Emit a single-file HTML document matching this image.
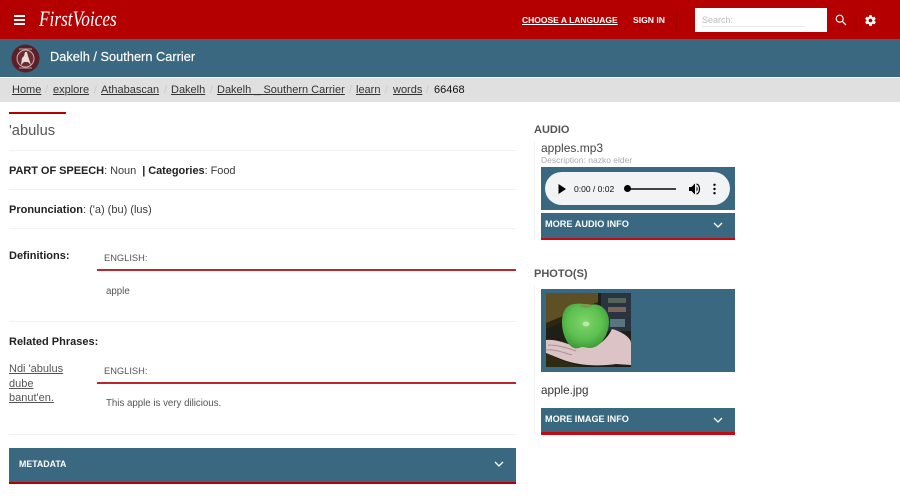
<!DOCTYPE html>
<html>
<head>
<meta charset="utf-8">
<style>
html,body{margin:0;padding:0;background:#fff;}
#p{position:relative;width:900px;height:502px;overflow:hidden;font-family:"Liberation Sans",sans-serif;color:#3a3a3a;font-size:11px;}
#p div,#p a,#p svg{position:absolute;white-space:nowrap;}
a{color:#444;text-decoration:underline;}
.bc{top:83px;font-size:11px;line-height:14px;color:#333;}
.sl{top:83px;font-size:11px;line-height:14px;color:#ccc;}
.hr{height:1px;background:#f0f0f0;}
b{color:#222;}
</style>
</head>
<body>
<div id="p">
<div style="left:0;top:0;width:900px;height:39px;background:#b40000"></div>
<div style="left:14px;top:15px;width:11px;height:1.500px;background:#fff"></div>
<div style="left:14px;top:19px;width:11px;height:1.500px;background:#fff"></div>
<div style="left:14px;top:23px;width:11px;height:1.500px;background:#fff"></div>
<div style="left:39px;top:7px;font-family:'Liberation Serif',serif;font-style:italic;font-size:22px;line-height:24px;color:#fff;transform:scaleX(.785);transform-origin:0 0">FirstVoices</div>
<a style="left:522px;top:14px;font-size:8.500px;line-height:12px;font-weight:bold;color:#fff">CHOOSE A LANGUAGE</a>
<div style="left:633px;top:14px;font-size:8.600px;line-height:12px;font-weight:bold;color:#fff">SIGN IN</div>
<div style="left:676px;top:11px;width:1px;height:19px;background:#a00000"></div>
<div style="left:695px;top:8px;width:132px;height:24px;background:#fff"></div>
<div style="left:702px;top:14px;font-size:9px;line-height:12px;color:#bbb">Search:</div>
<div style="left:702px;top:26px;width:103px;height:1px;background:#e8e8e8"></div>
<svg style="left:835px;top:14px" width="12" height="12" viewBox="0 0 12 12"><circle cx="4.700" cy="4.700" r="3.500" fill="none" stroke="#fff" stroke-width="1.100"/><path d="M7.300 7.300L11 11" stroke="#fff" stroke-width="1.300"/></svg>
<div style="left:856px;top:11px;width:1px;height:19px;background:#a80000"></div>
<svg style="left:864px;top:14px" width="13" height="13" viewBox="0 0 24 24"><path fill="#fff" d="M19.400 13c.1-.3.1-.7.1-1s0-.7-.1-1l2.100-1.600c.2-.2.2-.4.1-.6l-2-3.500c-.1-.2-.4-.3-.6-.2l-2.500 1c-.5-.4-1.100-.7-1.700-1L14.400 2.400C14.400 2.200 14.200 2 14 2h-4c-.2 0-.4.200-.5.400L9.100 5.100c-.6.300-1.200.600-1.700 1l-2.500-1c-.2-.1-.5 0-.6.200l-2 3.500c-.1.200-.1.400.1.600L4.500 11c0 .3-.1.700-.1 1s0 .7.100 1l-2.100 1.600c-.2.200-.2.400-.1.600l2 3.500c.1.200.4.300.6.200l2.500-1c.5.400 1.100.7 1.700 1l.4 2.700c0 .2.200.4.500.4h4c.2 0 .4-.2.500-.4l.4-2.700c.6-.3 1.200-.6 1.700-1l2.500 1c.2.100.5 0 .6-.2l2-3.500c.1-.2.100-.4-.1-.6L19.400 13zM12 15.500c-1.900 0-3.500-1.600-3.500-3.500s1.600-3.500 3.500-3.500 3.500 1.600 3.500 3.500-1.600 3.500-3.500 3.500z"/></svg>

<div style="left:0;top:39px;width:900px;height:38px;background:#3a6880"></div>
<svg style="left:11px;top:44px" width="29" height="29" viewBox="0 0 29 29"><circle cx="14.500" cy="14.500" r="14" fill="#5c1f28"/><circle cx="14.500" cy="14.500" r="8.500" fill="#6e2a32" stroke="#c9b3b3" stroke-width="1"/><path d="M10 21L11 14L13 12L14 8L16 8L17 12L20 21L17 18L13 18Z" fill="#e6dcdc"/><path d="M8 5H21M8 24H21" stroke="#b9a3a5" stroke-width="1"/></svg>
<div style="left:50px;top:48px;font-size:12.800px;line-height:18px;color:#fff;-webkit-text-stroke:.15px #fff">Dakelh / Southern Carrier</div>

<div style="left:0;top:78px;width:900px;height:24px;background:#e0e0e0"></div>
<a class="bc" style="left:12px">Home</a><div class="sl" style="left:45px">/</div>
<a class="bc" style="left:53px">explore</a><div class="sl" style="left:94px">/</div>
<a class="bc" style="left:101px">Athabascan</a><div class="sl" style="left:164px">/</div>
<a class="bc" style="left:171px">Dakelh</a><div class="sl" style="left:210px">/</div>
<a class="bc" style="left:217px">Dakelh _ Southern Carrier</a><div class="sl" style="left:349px">/</div>
<a class="bc" style="left:356px">learn</a><div class="sl" style="left:385px">/</div>
<a class="bc" style="left:393px">words</a><div class="sl" style="left:426px">/</div>
<div class="bc" style="left:434px;color:#111">66468</div>

<div style="left:9px;top:112px;width:57px;height:2px;background:#b40000"></div>
<div style="left:9px;top:122px;font-size:14.700px;line-height:18px;color:#555">'abulus</div>
<div class="hr" style="left:9px;top:150px;width:507px"></div>
<div style="left:9px;top:164px;line-height:14px;letter-spacing:-.05px"><b>PART OF SPEECH</b>: Noun &nbsp;<b>| Categories</b>: Food</div>
<div class="hr" style="left:9px;top:189px;width:507px"></div>
<div style="left:9px;top:203px;line-height:14px"><b>Pronunciation</b>: ('a) (bu) (lus)</div>
<div class="hr" style="left:9px;top:228px;width:507px"></div>

<div style="left:9px;top:249px;line-height:14px;font-weight:bold;color:#222">Definitions:</div>
<div style="left:104px;top:252px;font-size:9.300px;line-height:12px;color:#555">ENGLISH:</div>
<div style="left:97px;top:269px;width:419px;height:2px;background:#b8282e"></div>
<div style="left:106px;top:286px;font-size:9.700px;line-height:12px;color:#555">apple</div>
<div class="hr" style="left:9px;top:321px;width:507px"></div>

<div style="left:9px;top:335px;line-height:14px;font-weight:bold;color:#222">Related Phrases:</div>
<a style="left:9px;top:362px;line-height:14.500px;color:#555">Ndi 'abulus</a>
<a style="left:9px;top:377px;line-height:14.500px;color:#555">dube</a>
<a style="left:9px;top:391px;line-height:14.500px;color:#555">banut'en.</a>
<div style="left:104px;top:365px;font-size:9.300px;line-height:12px;color:#555">ENGLISH:</div>
<div style="left:97px;top:382px;width:419px;height:2px;background:#b8282e"></div>
<div style="left:106px;top:398px;font-size:9.700px;line-height:12px;color:#555">This apple is very dilicious.</div>
<div class="hr" style="left:9px;top:434px;width:507px"></div>

<div style="left:9px;top:448px;width:507px;height:34px;background:#3a6880"></div>
<div style="left:9px;top:482px;width:507px;height:2px;background:#b40000"></div>
<div style="left:19px;top:458px;font-size:8.800px;line-height:12px;font-weight:bold;color:#fff">METADATA</div>
<svg style="left:494px;top:461px" width="10" height="7" viewBox="0 0 10 7"><path d="M1 1L5 5L9 1" fill="none" stroke="#fff" stroke-width="1.300"/></svg>

<div style="left:534px;top:123px;font-size:11px;line-height:14px;font-weight:bold;color:#555">AUDIO</div>
<div style="left:534px;top:141px;width:1px;height:99px;background:#f2f2f2"></div>
<div style="left:541px;top:141px;font-size:12px;line-height:14px;color:#444">apples.mp3</div>
<div style="left:541px;top:154px;font-size:8.500px;line-height:12px;color:#aaa">Description: nazko elder</div>
<div style="left:541px;top:167px;width:194px;height:43px;background:#3a6880"></div>
<div style="left:545px;top:172px;width:185px;height:33px;border-radius:17px;background:#f1f3f4"></div>
<svg style="left:558px;top:184px" width="9" height="10" viewBox="0 0 9 10"><path d="M0.500 0V10L8 5Z" fill="#000"/></svg>
<div style="left:574px;top:183px;font-size:8.500px;line-height:12px;color:#111">0:00 / 0:02</div>
<div style="left:626px;top:188px;width:50px;height:1.500px;background:#444"></div>
<div style="left:624px;top:185px;width:7px;height:7px;border-radius:50%;background:#000"></div>
<svg style="left:689px;top:183px" width="13" height="12" viewBox="0 0 13 12"><path d="M0 4V8H2.500L6 11.500V.5L2.500 4Z" fill="#000"/><path d="M7.500 3.500C9 4.500 9 7.500 7.500 8.500Z" fill="#000"/><path d="M7.500 1C11.500 2 11.500 10 7.500 11" fill="none" stroke="#000" stroke-width="1.200"/></svg>
<svg style="left:712px;top:183px" width="5" height="12" viewBox="0 0 5 12"><circle cx="2.500" cy="1.800" r="1.200"/><circle cx="2.500" cy="6" r="1.200"/><circle cx="2.500" cy="10.200" r="1.200"/></svg>
<div style="left:541px;top:213px;width:194px;height:25px;background:#3a6880"></div>
<div style="left:541px;top:237.500px;width:194px;height:2.500px;background:#c40a12"></div>
<div style="left:545px;top:218px;font-size:9.200px;line-height:12px;font-weight:bold;color:#fff">MORE AUDIO INFO</div>
<svg style="left:713px;top:222px" width="10" height="7" viewBox="0 0 10 7"><path d="M1 1L5 5L9 1" fill="none" stroke="#fff" stroke-width="1.300"/></svg>

<div style="left:534px;top:267px;font-size:11px;line-height:14px;font-weight:bold;color:#555">PHOTO(S)</div>
<div style="left:534px;top:285px;width:1px;height:150px;background:#f2f2f2"></div>
<div style="left:541px;top:289px;width:194px;height:83px;background:#3a6880"></div>
<svg style="left:546px;top:293px" width="85" height="74" viewBox="0 0 85 74">
<defs><radialGradient id="g" cx=".48" cy=".42" r=".62"><stop offset="0" stop-color="#7fd46c"/><stop offset=".6" stop-color="#5cc04e"/><stop offset="1" stop-color="#3c9436"/></radialGradient></defs>
<rect width="85" height="74" fill="#1e2018"/>
<path d="M0 0H52V9L0 30Z" fill="#5e5024"/>
<path d="M0 30L52 9V14L0 36Z" fill="#2c2612"/>
<rect x="55" y="0" width="30" height="38" fill="#2a3440"/>
<rect x="62" y="5" width="18" height="5" fill="#55655a"/><rect x="62" y="14" width="18" height="5" fill="#7d6458"/><rect x="64" y="26" width="15" height="8" fill="#5a7480"/>
<path d="M0 47C10 46 20 50 30 54L48 54C60 48 64 40 66 36C74 38 85 44 85 50V72L70 71C50 74 30 72 15 66L0 60Z" fill="#dcc4c6"/>
<path d="M2 52C12 52 22 55 30 58M0 57C10 56 18 60 26 62" stroke="#a89096" stroke-width="1" fill="none"/>
<path d="M0 60V74H40C28 72 15 68 0 60Z" fill="#2e2a14"/>
<path d="M28 11C34 10 40 11 44 12C54 9 63 17 63 29C63 42 54 55 44 55C41 55 38 54 36 54C33 55 30 56 28 55C22 53 16 42 16 29C16 19 20 12 28 11Z" fill="url(#g)"/>
<ellipse cx="40" cy="31" rx="3.500" ry="2.500" fill="#b8e8aa"/>
<ellipse cx="40" cy="13" rx="6" ry="2" fill="#7a9a50"/>
</svg>
<div style="left:541px;top:384px;font-size:11.700px;line-height:14px;color:#333">apple.jpg</div>
<div style="left:541px;top:408px;width:194px;height:25px;background:#3a6880"></div>
<div style="left:541px;top:432px;width:194px;height:3px;background:#c40a12"></div>
<div style="left:545px;top:413px;font-size:9.100px;line-height:12px;font-weight:bold;color:#fff">MORE IMAGE INFO</div>
<svg style="left:713px;top:417px" width="10" height="7" viewBox="0 0 10 7"><path d="M1 1L5 5L9 1" fill="none" stroke="#fff" stroke-width="1.300"/></svg>
</div>
</body>
</html>
